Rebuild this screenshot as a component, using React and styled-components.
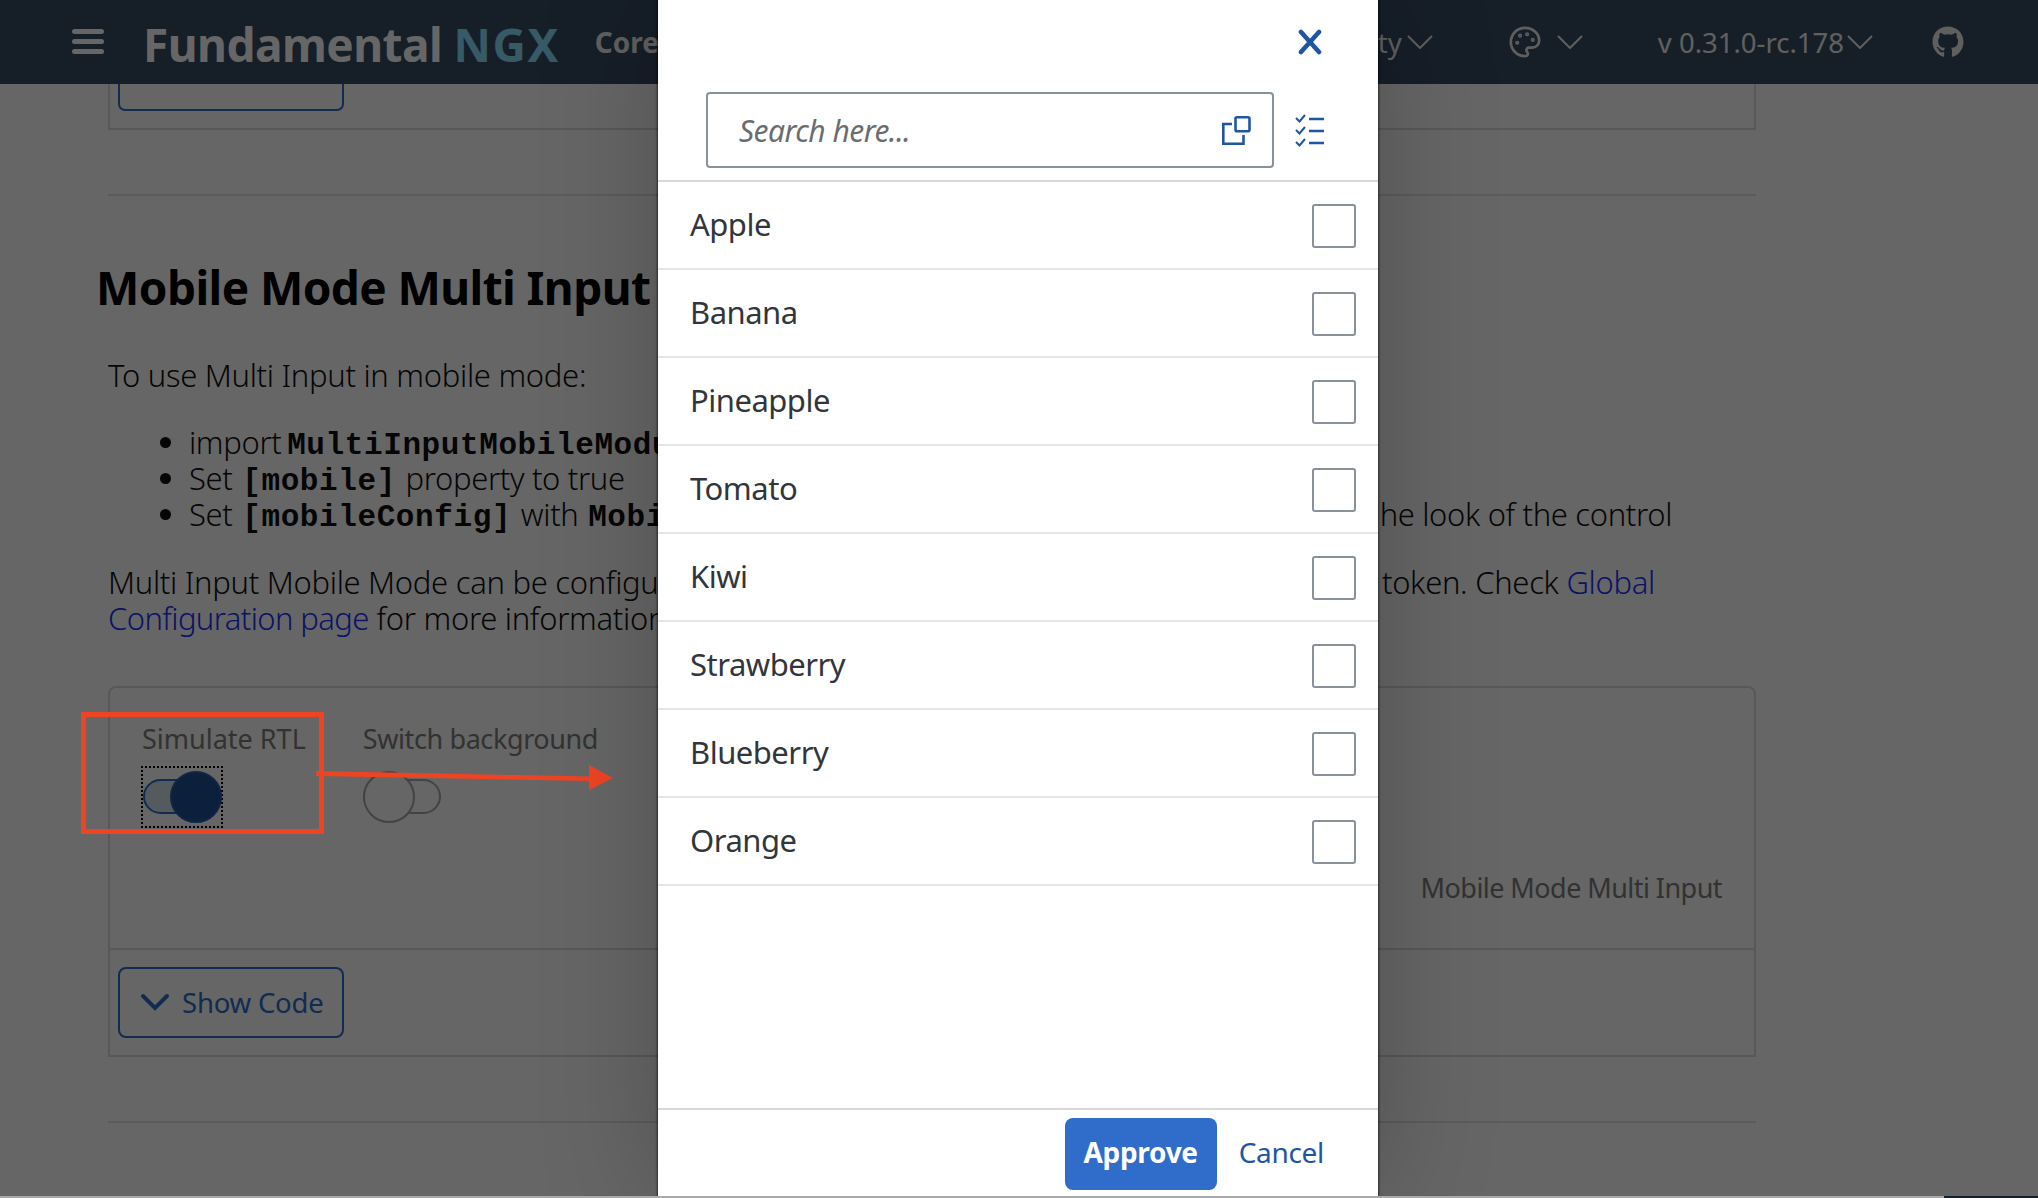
import React from 'react';
import styled, { createGlobalStyle } from 'styled-components';
import { Palette } from 'lucide-react';
import { FaGithub } from 'react-icons/fa';

const Global = createGlobalStyle`
  html, body { margin: 0; padding: 0; height: 100%; overflow: hidden; background: #fff; }
  * { box-sizing: border-box; }
  body { font-family: "Noto Sans", "Open Sans", sans-serif; }
`;

const Stage = styled.div`
  position: relative;
  height: 1198px;
  overflow: hidden;
  background: #fff;
`;

const TopBar = styled.header`
  height: 84px;
  background: #374b64;
  display: flex;
  align-items: center;
  justify-content: space-between;
  padding: 0 74px 0 72px;
  color: #fff;
`;
const BarGroup = styled.div`
  display: flex;
  align-items: center;
`;
const Burger = styled.svg`
  width: 32px;
  height: 26px;
  margin-right: 39px;
  color: #fff;
`;
const Brand = styled.div`
  font-size: 46px;
  font-weight: 700;
  letter-spacing: -0.55px;
  margin-right: 35px;
  padding-top: 3px;
  white-space: nowrap;
  color: #fff;
  span { color: #8ae0ff; letter-spacing: 1.6px; }
`;
const NavItem = styled.span`
  font-size: ${p => (p.$bold ? 28 : 27.5)}px;
  font-weight: ${p => (p.$bold ? 700 : 400)};
  white-space: nowrap;
  color: #f0f0f0;
`;
const Chevron = styled.svg`
  width: 26px;
  height: 14px;
  margin-left: ${p => p.$gap || 5}px;
  flex: none;
  color: #eee;
`;
const NavSlot = styled.div`
  display: flex;
  align-items: center;
  margin-left: ${p => p.$gap}px;
`;

const Content = styled.main`
  width: 1648px;
  margin-left: 108px;
`;
const CardStub = styled.div`
  height: 46px;
  border: 2px solid #dcdcdc;
  border-top: none;
  padding-left: 8px;
`;
const StubButton = styled.div`
  width: 226px;
  height: 27px;
  border: 2px solid #306dca;
  border-top: none;
  border-radius: 0 0 7px 7px;
`;
const Rule = styled.hr`
  height: 2px;
  margin: ${p => p.$top}px 0 0;
  border: none;
  background: #e4e4e4;
`;
const Title = styled.h2`
  margin: ${p => p.$top}px 0 0 -12px;
  font-size: 46px;
  line-height: 52px;
  font-weight: 700;
  letter-spacing: -0.6px;
  color: #000;
  white-space: nowrap;
`;
const Para = styled.p`
  margin: ${p => p.$top}px 0 0;
  font-size: 31px;
  font-weight: 300;
  line-height: 36.5px;
  letter-spacing: -0.3px;
  color: #0f0f0f;
  white-space: nowrap;
`;
const Bullets = styled.ul`
  margin: 30px 0 0;
  padding: 0 0 0 81px;
  font-size: 31px;
  font-weight: 300;
  line-height: 36px;
  letter-spacing: -0.35px;
  color: #0f0f0f;
  white-space: nowrap;
`;
const Code = styled.code`
  font-family: "Liberation Mono", monospace;
  font-weight: 700;
  font-size: 31px;
  line-height: 0;
  letter-spacing: 0.6px;
  margin: 0 2px 0 ${p => p.$left ?? 2}px;
`;
const Link = styled.a`
  color: #1c30ff;
  letter-spacing: ${p => (p.$tight ? -0.6 : -0.3)}px;
`;
const Filler = styled.span`
  display: inline-block;
  width: ${p => p.$w}px;
`;

const Card = styled.section`
  margin-top: 49px;
  height: 371px;
  border: 2px solid #dcdcdc;
  border-radius: 8px 8px 0 0;
  display: flex;
  flex-direction: column;
`;
const CardBody = styled.div`
  height: 262px;
  padding: 35px 32px 0;
  border-bottom: 2px solid #dcdcdc;
  display: flex;
  justify-content: space-between;
`;
const Switches = styled.div`
  display: flex;
  gap: 57px;
`;
const SwitchField = styled.div`
  display: flex;
  flex-direction: column;
  align-items: flex-start;
`;
const FieldLabel = styled.label`
  font-size: 27px;
  line-height: 32px;
  font-weight: 400;
  letter-spacing: ${p => p.$tight ? -0.4 : 0}px;
  color: #7e7e7e;
  white-space: nowrap;
`;
const ToggleWrap = styled.div`
  position: relative;
  width: 80px;
  height: 60px;
  margin-top: 12px;
  outline: ${p => (p.$focus ? '2px dotted #000' : 'none')};
  outline-offset: -1px;
`;
const Track = styled.div`
  position: absolute;
  left: ${p => (p.$on ? 1 : 0)}px;
  top: 12px;
  width: 78px;
  height: 35px;
  border-radius: 18px;
  border: 2px solid ${p => (p.$on ? '#306dca' : '#a8a8a8')};
  background: ${p => (p.$on ? '#d2e1e8' : 'transparent')};
`;
const Knob = styled.div`
  position: absolute;
  top: 4px;
  left: ${p => (p.$on ? 28 : 0)}px;
  width: 52px;
  height: 52px;
  border-radius: 50%;
  border: 2px solid ${p => (p.$on ? '#2a5cab' : '#a8a8a8')};
  background: ${p => (p.$on ? '#205096' : '#fff')};
`;
const SideLabel = styled.div`
  align-self: flex-end;
  margin-bottom: 44px;
  font-size: 27px;
  line-height: 32px;
  color: #7e7e7e;
  letter-spacing: -0.55px;
  white-space: nowrap;
`;
const CardFoot = styled.div`
  padding: 17px 8px 0;
`;
const ShowCode = styled.button`
  width: 226px;
  height: 71px;
  padding: 0 0 0 20px;
  display: flex;
  align-items: center;
  gap: 12px;
  background: transparent;
  border: 2px solid #306dca;
  border-radius: 8px;
  font: 400 27.5px "Noto Sans", sans-serif;
  letter-spacing: -0.2px;
  color: #306dca;
  svg { width: 30px; height: 18px; }
`;

const Overlay = styled.div`
  position: absolute;
  inset: 0;
  background: rgba(0, 0, 0, 0.6);
`;

const Modal = styled.div`
  position: absolute;
  top: 0;
  left: 658px;
  width: 720px;
  height: 1196px;
  background: #fff;
  display: flex;
  flex-direction: column;
  box-shadow: 0 0 2px 1px rgba(0, 0, 0, 0.55), 0 0 110px rgba(0, 0, 0, 0.22);
`;
const ModalHead = styled.div`
  padding: 29px 53px 0 48px;
  height: 182px;
  border-bottom: 2px solid #d9d9d9;
  display: flex;
  flex-direction: column;
`;
const CloseButton = styled.button`
  align-self: flex-end;
  width: 24px;
  height: 26px;
  margin-right: 3px;
  padding: 0;
  border: none;
  background: none;
  color: #1f56a3;
  svg { width: 100%; height: 100%; display: block; }
`;
const SearchRow = styled.div`
  margin-top: 37px;
  display: flex;
  align-items: center;
  justify-content: space-between;
`;
const SearchBox = styled.div`
  width: 568px;
  height: 76px;
  border: 2px solid #89919a;
  border-radius: 4px;
  display: flex;
  align-items: center;
  padding: 0 21px 0 29px;
`;
const SearchInput = styled.input`
  flex: 1;
  min-width: 0;
  border: none;
  outline: none;
  background: none;
  font: italic 400 30px "Noto Sans", sans-serif;
  letter-spacing: -0.55px;
  color: #6a6d70;
  &::placeholder { color: #6a6d70; opacity: 1; }
`;
const BlueIcon = styled.svg`
  width: ${p => p.$w}px;
  height: ${p => p.$h}px;
  flex: none;
  color: #1f56a3;
`;
const Options = styled.div`
  flex: 1;
`;
const Option = styled.div`
  height: 88px;
  padding: 0 22px 2px 32px;
  border-bottom: 2px solid #e5e5e5;
  display: flex;
  align-items: center;
  justify-content: space-between;
  font-size: 31px;
  letter-spacing: -0.5px;
  color: #32363a;
`;
const Check = styled.span`
  width: 44px;
  height: 44px;
  margin-bottom: -4px;
  border: 2px solid #89919a;
  border-radius: 3px;
  background: #fff;
`;
const ModalFoot = styled.div`
  height: 88px;
  border-top: 2px solid #d9d9d9;
  padding: 8px 53px 0 0;
  display: flex;
  justify-content: flex-end;
  align-items: flex-start;
  gap: 22px;
`;
const Approve = styled.button`
  width: 152px;
  height: 72px;
  padding: 0 0 4px;
  border: none;
  border-radius: 8px;
  background: #306dca;
  color: #fff;
  font: 700 28px "Noto Sans", sans-serif;
  letter-spacing: -0.3px;
`;
const Cancel = styled.button`
  height: 72px;
  padding: 0 1px 5px 0;
  border: none;
  background: none;
  color: #1f56a3;
  font: 400 28px "Noto Sans", sans-serif;
  letter-spacing: -0.3px;
`;

const RedFrame = styled.div`
  position: absolute;
  left: 81px;
  top: 712px;
  width: 243px;
  height: 122px;
  border: 5px solid #ee4424;
`;
const RedArrow = styled.svg`
  position: absolute;
  left: 316px;
  top: 760px;
  width: 300px;
  height: 36px;
`;
const BottomEdge = styled.div`
  position: absolute;
  left: 0;
  right: 0;
  bottom: 0;
  height: 2px;
  background: #a9a9a9;
  display: flex;
  justify-content: flex-end;
`;
const EdgeDark = styled.div`
  width: 94px;
  background: #161e28;
`;

const ChevronIcon = ({ gap }) => (
  <Chevron $gap={gap} viewBox="0 0 26 14" fill="none" stroke="currentColor" strokeWidth="2">
    <path d="M1 1l12 12L25 1" />
  </Chevron>
);

const fruits = ['Apple', 'Banana', 'Pineapple', 'Tomato', 'Kiwi', 'Strawberry', 'Blueberry', 'Orange'];

export default function App() {
  return (
    <Stage>
      <Global />
      <TopBar>
        <BarGroup>
          <Burger viewBox="0 0 32 26" fill="currentColor">
            <rect width="32" height="5" y="0" rx="2.5" />
            <rect width="32" height="5" y="10" rx="2.5" />
            <rect width="32" height="5" y="20" rx="2.5" />
          </Burger>
          <Brand>Fundamental <span>NGX</span></Brand>
          <NavItem $bold>Core</NavItem>
        </BarGroup>
        <BarGroup>
          <NavItem>Accessibility</NavItem>
          <ChevronIcon />
          <NavSlot $gap={75}>
            <Palette size={34} color="#eee" strokeWidth={1.9} />
            <ChevronIcon gap={15} />
          </NavSlot>
          <NavSlot $gap={75}>
            <NavItem>v 0.31.0-rc.178</NavItem>
            <ChevronIcon gap={3} />
          </NavSlot>
          <NavSlot $gap={59}>
            <FaGithub size={32} color="#eee" />
          </NavSlot>
        </BarGroup>
      </TopBar>
      <Content>
        <CardStub><StubButton /></CardStub>
        <Rule $top={64} />
        <Title $top={65}>Mobile Mode Multi Input</Title>
        <Para $top={44}>To use Multi Input in mobile mode:</Para>
        <Bullets>
          <li>import <Code $left={-2}>MultiInputMobileModule</Code></li>
          <li>Set <Code>[mobile]</Code> property to true</li>
          <li>Set <Code>[mobileConfig]</Code> with <Code>MobileInputConfig</Code><Filler $w={463} />he look of the control</li>
        </Bullets>
        <Para $top={32}>Multi Input Mobile Mode can be configured<Filler $w={677} />token. Check <Link>Global</Link><br /><Link $tight>Configuration page</Link> for more information</Para>
        <Card>
          <CardBody>
            <Switches>
              <SwitchField>
                <FieldLabel>Simulate RTL</FieldLabel>
                <ToggleWrap $focus><Track $on /><Knob $on /></ToggleWrap>
              </SwitchField>
              <SwitchField>
                <FieldLabel $tight>Switch background</FieldLabel>
                <ToggleWrap><Track /><Knob /></ToggleWrap>
              </SwitchField>
            </Switches>
            <SideLabel>Mobile Mode Multi Input</SideLabel>
          </CardBody>
          <CardFoot>
            <ShowCode>
              <svg viewBox="0 0 30 18" fill="none" stroke="currentColor" strokeWidth="4" strokeLinecap="round"><path d="M3 3l12 12L27 3" /></svg>
              Show Code
            </ShowCode>
          </CardFoot>
        </Card>
        <Rule $top={64} />
        <Title $top={66}>Multi Input in Reactive Forms and Validation</Title>
      </Content>
      <Overlay />
      <RedFrame />
      <RedArrow viewBox="0 0 300 36" fill="#ee4424">
        <path d="M0 11L274 16.5V21L0 16Z" />
        <path d="M273 5l24 13-24 12z" />
      </RedArrow>
      <Modal>
        <ModalHead>
          <CloseButton aria-label="Close">
            <svg viewBox="0 0 24 26" fill="none" stroke="currentColor" strokeWidth="4.6" strokeLinecap="round"><path d="M3 3l18 20M21 3L3 23" /></svg>
          </CloseButton>
          <SearchRow>
            <SearchBox>
              <SearchInput placeholder="Search here..." readOnly />
              <BlueIcon $w={29} $h={29} viewBox="0 0 29 29" fill="none" stroke="currentColor" strokeWidth="2.6">
                <rect x="13.5" y="1.3" width="14" height="14" rx="1.5" />
                <path d="M10 8H1.3v19.7H21.5V19" />
              </BlueIcon>
            </SearchBox>
            <BlueIcon $w={30} $h={33} viewBox="0 0 30 33" fill="none" stroke="currentColor" strokeWidth="2.4">
              <path d="M14 5h15M14 17h15M14 29h15" />
              <path d="M1 4l3.5 3.5L10 1M1 16l3.5 3.5L10 13M1 28l3.5 3.5L10 25" strokeWidth="2" />
            </BlueIcon>
          </SearchRow>
        </ModalHead>
        <Options>
          {fruits.map(f => (
            <Option key={f}>{f}<Check /></Option>
          ))}
        </Options>
        <ModalFoot>
          <Approve>Approve</Approve>
          <Cancel>Cancel</Cancel>
        </ModalFoot>
      </Modal>
      <BottomEdge><EdgeDark /></BottomEdge>
    </Stage>
  );
}
